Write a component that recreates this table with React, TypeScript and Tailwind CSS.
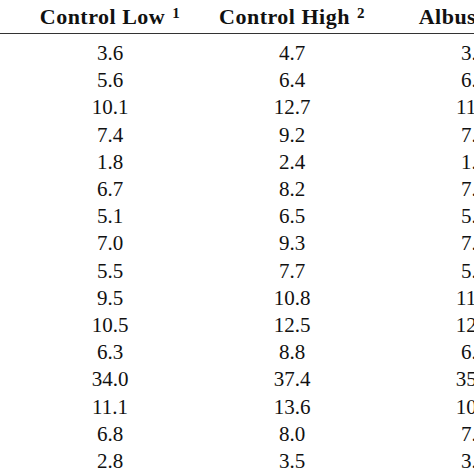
const rows: [string, string, string][] = [
  ["3.6", "4.7", "3.9"],
  ["5.6", "6.4", "6.0"],
  ["10.1", "12.7", "11.4"],
  ["7.4", "9.2", "7.9"],
  ["1.8", "2.4", "1.9"],
  ["6.7", "8.2", "7.1"],
  ["5.1", "6.5", "5.6"],
  ["7.0", "9.3", "7.8"],
  ["5.5", "7.7", "5.9"],
  ["9.5", "10.8", "11.0"],
  ["10.5", "12.5", "12.1"],
  ["6.3", "8.8", "6.9"],
  ["34.0", "37.4", "35.2"],
  ["11.1", "13.6", "10.9"],
  ["6.8", "8.0", "7.2"],
  ["2.8", "3.5", "3.1"],
];

const headers = [
  { label: "Control Low", note: "1" },
  { label: "Control High", note: "2" },
  { label: "Albusmin", note: "3" },
];

export default function App() {
  return (
    <div
      className="h-[474px] w-[474px] overflow-hidden bg-white text-[#111]"
      style={{ fontFamily: '"Liberation Serif", "DejaVu Serif", serif' }}
    >
      <div className="border-b-[1.5px] border-[#333]">
        <div className="grid h-[33px] grid-cols-[182px_182px_182px] pl-[19px] pb-[3px]">
          {headers.map((h) => (
            <div
              key={h.label}
              className="flex items-center justify-center whitespace-nowrap text-[22px] font-bold tracking-[0.5px]"
            >
              {h.label}
              <sup className="relative -top-[4px] ml-[7px] text-[15px]">{h.note}</sup>
            </div>
          ))}
        </div>
      </div>
      <div className="pt-[6px]">
        {rows.map((r, i) => (
          <div
            key={i}
            className="grid h-[27.2px] grid-cols-[182px_182px_182px] items-center pl-[19px] text-[21px] leading-none"
          >
            {r.map((v, j) => (
              <div key={j} className="text-center">
                {v}
              </div>
            ))}
          </div>
        ))}
      </div>
    </div>
  );
}
